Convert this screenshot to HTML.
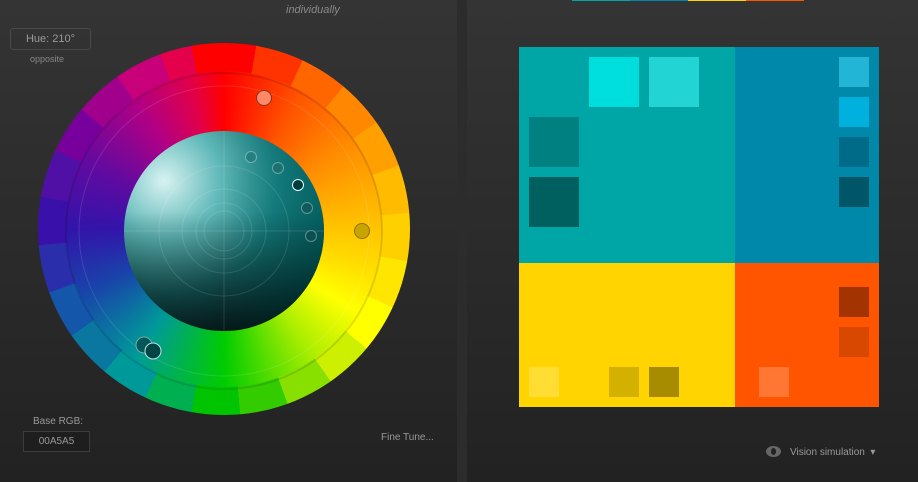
<!DOCTYPE html>
<html><head><style>
*{margin:0;padding:0;box-sizing:border-box}
body{width:918px;height:482px;overflow:hidden;background:linear-gradient(#343434,#222);font-family:"Liberation Sans",sans-serif;position:relative}
.a{position:absolute}
.sq{position:absolute}
</style></head><body>
<div class="a" style="left:457px;top:0;width:10px;height:482px;background:#2c2c2c"></div>
<div class="a" style="left:286px;top:4px;font-size:11px;font-style:italic;color:#8a8a8a">individually</div>
<div class="a" style="left:10px;top:28px;width:81px;height:22px;border:1px solid #484848;border-radius:3px;color:#999;font-size:11px;text-align:center;line-height:20px">Hue: 210°</div>
<div class="a" style="left:30px;top:54px;font-size:9px;color:#888">opposite</div>
<div class="a" style="left:33px;top:416px;font-size:10px;color:#999">Base RGB:</div>
<div class="a" style="left:23px;top:431px;width:67px;height:21px;border:1px solid #3c3c3c;background:#1e1e1e;color:#999;font-size:10px;text-align:center;line-height:19px">00A5A5</div>
<div class="a" style="left:381px;top:432px;font-size:10px;color:#999">Fine Tune...</div>
<div class="a" style="left:766px;top:446px;width:15px;height:11px;border-radius:50%;background:#666"></div>
<div class="a" style="left:771px;top:448px;width:5px;height:7px;border-radius:50%;background:#222"></div>
<div class="a" style="left:790px;top:447px;font-size:10px;color:#999">Vision simulation &nbsp;▾</div>

<svg class="a" style="left:0;top:0" width="460" height="482">
<defs>
<radialGradient id="g1" cx="0.2" cy="0.25" r="0.95">
<stop offset="0" stop-color="#d8f2f2"/><stop offset="0.3" stop-color="#5fb8b8"/><stop offset="0.6" stop-color="#1a6f70"/><stop offset="1" stop-color="#021c1d"/></radialGradient>
<linearGradient id="g2" x1="0" y1="0" x2="0" y2="1"><stop offset="0.4" stop-color="#000" stop-opacity="0"/><stop offset="1" stop-color="#000" stop-opacity="0.6"/></linearGradient>
<linearGradient id="g3" x1="0" y1="0" x2="1" y2="0"><stop offset="0.5" stop-color="#00a5a5" stop-opacity="0"/><stop offset="1" stop-color="#008a8a" stop-opacity="0.5"/></linearGradient>
</defs>
<foreignObject x="38" y="43" width="372" height="372">
<div xmlns="http://www.w3.org/1999/xhtml" style="width:372px;height:372px;border-radius:50%;position:relative;background:conic-gradient(#ff0000 0 10deg,#ff3300 10deg 25deg,#ff6600 25deg 40deg,#ff8800 40deg 55deg,#ffa000 55deg 70deg,#ffbb00 70deg 85deg,#ffd000 85deg 100deg,#ffe600 100deg 115deg,#ffff00 115deg 130deg,#ccf000 130deg 145deg,#88e000 145deg 160deg,#33cc00 160deg 175deg,#00c400 175deg 190deg,#00b050 190deg 205deg,#009999 205deg 220deg,#0a77a0 220deg 235deg,#1456aa 235deg 250deg,#2a2eaa 250deg 265deg,#3a10aa 265deg 280deg,#5010a6 280deg 295deg,#77009c 295deg 310deg,#a0008c 310deg 325deg,#c8007a 325deg 340deg,#e4004a 340deg 350deg,#ff0000 350deg)">
<div style="position:absolute;left:28px;top:28px;width:316px;height:316px;border-radius:50%;background:conic-gradient(#ff0000 0deg,#ff5500 30deg,#ff8a00 55deg,#ffb400 80deg,#ffdd00 105deg,#ffff00 122deg,#aaee00 145deg,#00cc00 180deg,#009999 215deg,#1845aa 245deg,#3214aa 270deg,#600aa0 295deg,#b00085 325deg,#e0004a 347deg,#ff0000 360deg)"></div>
</div>
</foreignObject>
<circle cx="224" cy="231" r="145" fill="none" stroke="rgba(255,255,255,0.12)"/>
<circle cx="224" cy="231" r="158" fill="none" stroke="rgba(0,0,0,0.12)" stroke-width="2"/>
<circle cx="224" cy="231" r="100" fill="url(#g1)"/>
<circle cx="224" cy="231" r="100" fill="url(#g3)"/>
<circle cx="224" cy="231" r="100" fill="url(#g2)"/>
<g fill="none" stroke="rgba(255,255,255,0.12)">
<circle cx="224" cy="231" r="20"/><circle cx="224" cy="231" r="28"/><circle cx="224" cy="231" r="42"/><circle cx="224" cy="231" r="65"/>
<line x1="124" y1="231" x2="324" y2="231"/><line x1="224" y1="131" x2="224" y2="331"/>
</g>
<circle cx="264" cy="98" r="7.5" fill="#ff8866" stroke="#883322"/>
<circle cx="362" cy="231" r="7.5" fill="#c8a400" stroke="#8a7300"/>
<circle cx="144" cy="345" r="8" fill="#005858" stroke="#7aa"/>
<circle cx="153" cy="351" r="8" fill="#004545" stroke="#cde"/>
<g stroke="rgba(255,255,255,0.35)">
<circle cx="251" cy="157" r="5.5" fill="#237f80"/>
<circle cx="278" cy="168" r="5.5" fill="#1a7172"/>
<circle cx="298" cy="185" r="5.5" fill="#003c3c" stroke="#dff"/>
<circle cx="307" cy="208" r="5.5" fill="#0f5a5b"/>
<circle cx="311" cy="236" r="5.5" fill="#0c4f50"/>
</g>
</svg>

<div class="a" style="left:572px;top:0;width:58px;height:1px;background:#00a5a5"></div>
<div class="a" style="left:630px;top:0;width:58px;height:1px;background:#0088aa"></div>
<div class="a" style="left:688px;top:0;width:58px;height:1px;background:#ffd400"></div>
<div class="a" style="left:746px;top:0;width:58px;height:1px;background:#ff5500"></div>

<div class="sq" style="left:519px;top:47px;width:216px;height:216px;background:#00a5a5"></div>
<div class="sq" style="left:735px;top:47px;width:144px;height:216px;background:#0088aa"></div>
<div class="sq" style="left:519px;top:263px;width:216px;height:144px;background:#ffd400"></div>
<div class="sq" style="left:735px;top:263px;width:144px;height:144px;background:#ff5500"></div>
<div class="sq" style="left:589px;top:57px;width:50px;height:50px;background:#00dddd"></div>
<div class="sq" style="left:649px;top:57px;width:50px;height:50px;background:#22d4d4"></div>
<div class="sq" style="left:529px;top:117px;width:50px;height:50px;background:#008080"></div>
<div class="sq" style="left:529px;top:177px;width:50px;height:50px;background:#006060"></div>
<div class="sq" style="left:839px;top:57px;width:30px;height:30px;background:#22b5d5"></div>
<div class="sq" style="left:839px;top:97px;width:30px;height:30px;background:#00b0dd"></div>
<div class="sq" style="left:839px;top:137px;width:30px;height:30px;background:#006b88"></div>
<div class="sq" style="left:839px;top:177px;width:30px;height:30px;background:#005566"></div>
<div class="sq" style="left:839px;top:287px;width:30px;height:30px;background:#a33300"></div>
<div class="sq" style="left:839px;top:327px;width:30px;height:30px;background:#d94800"></div>
<div class="sq" style="left:759px;top:367px;width:30px;height:30px;background:#ff7733"></div>
<div class="sq" style="left:529px;top:367px;width:30px;height:30px;background:#ffdd33"></div>
<div class="sq" style="left:609px;top:367px;width:30px;height:30px;background:#d4b000"></div>
<div class="sq" style="left:649px;top:367px;width:30px;height:30px;background:#a88c00"></div>
</body></html>
